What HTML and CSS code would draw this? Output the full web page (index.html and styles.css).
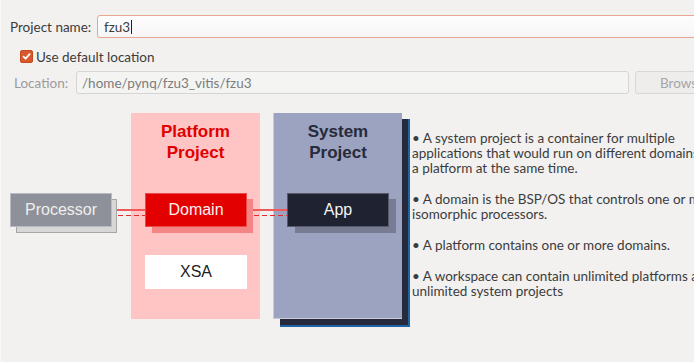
FILE: index.html
```html
<!DOCTYPE html>
<html lang="en">

<head>
  <meta charset="UTF-8" />
  <meta name="viewport" content="width=device-width, initial-scale=1.0" />
  <title>New Application Project</title>
  <link rel="stylesheet" href="styles.css">
</head>

<body>
  <div class="page">

    <!-- 项目名称和位置 -->
    <div class="form">
      <div class="row name-row">
        <label class="label">Project name:</label>
        <div class="input name-input"><span class="value">fzu3</span><span class="caret"></span></div>
      </div>

      <div class="row check-row">
        <span class="checkbox">
          <svg width="9" height="9" viewBox="0 0 9 9"><path d="M1.5 4.6 L3.6 6.7 L7.6 2.2" fill="none" stroke="#fff" stroke-width="1.8" stroke-linecap="round" stroke-linejoin="round"/></svg>
        </span>
        <span class="check-text">Use default location</span>
      </div>

      <div class="row loc-row">
        <label class="label dim">Location:</label>
        <div class="input loc-input"><span class="value">/home/pynq/fzu3_vitis/fzu3</span></div>
        <button class="browse">Browse...</button>
      </div>
    </div>

    <!-- 示意图和说明 -->
    <div class="overview">
      <div class="diagram">
        <div class="node platform">
          <div class="title">Platform<br />Project</div>
        </div>
        <div class="node system-shadow"></div>
        <div class="node system">
          <div class="title">System<br />Project</div>
        </div>

        <div class="wire solid"></div>
        <div class="wire dashed"></div>

        <div class="node box-shadow proc-shadow"></div>
        <div class="node box processor">Processor</div>
        <div class="node box-shadow domain-shadow"></div>
        <div class="node box domain">Domain</div>
        <div class="node box-shadow app-shadow"></div>
        <div class="node box app">App</div>
        <div class="node box xsa">XSA</div>
      </div>

      <div class="notes">
        <p>• A system project is a container for multiple<br />applications that would run on different domains on<br />a platform at the same time.</p>
        <p>• A domain is the BSP/OS that controls one or more<br />isomorphic processors.</p>
        <p>• A platform contains one or more domains.</p>
        <p>• A workspace can contain unlimited platforms and<br />unlimited system projects</p>
      </div>
    </div>

  </div>
</body>

</html>
```

FILE: styles.css
```css
* {
  margin: 0;
  padding: 0;
  box-sizing: border-box;
}

html,
body {
  width: 694px;
  height: 362px;
  overflow: hidden;
}

body {
  background: #f2f1f0;
  font: 13.5px "Lato", "Noto Sans", sans-serif;
  color: #3c3c3c;
}

.page {
  width: 694px;
  height: 362px;
  overflow: hidden;
  border-left: 1px solid #f8f8f7;
}

/* 表单部分 */
.form {
  height: 100px;
  padding: 15px 0 0 9px;
}

.row {
  display: flex;
  align-items: center;
}

.label {
  white-space: nowrap;
  flex-shrink: 0;
}

.label.dim {
  color: #9b9b9b;
  padding-left: 4px;
}

.input {
  height: 23px;
  display: flex;
  align-items: center;
  border-radius: 3px;
  white-space: nowrap;
  flex-shrink: 0;
}

.name-row .label {
  width: 87px;
}

.name-input {
  flex: 1;
  margin-right: -6px;
  padding-left: 6px;
  border: 1px solid #eaa58f;
  background: linear-gradient(#fdfdfd, #f6f6f6);
  color: #3c3c3c;
}

.caret {
  width: 1px;
  height: 14px;
  margin-left: 1px;
  background: #222;
}

.check-row {
  margin-top: 12px;
  padding-left: 10px;
  height: 13px;
}

.checkbox {
  width: 13px;
  height: 13px;
  border-radius: 2px;
  background: #d9592c;
  border: 1px solid #c44b22;
  display: flex;
  align-items: center;
  justify-content: center;
  margin-right: 3px;
}

.checkbox svg {
  display: block;
}

.loc-row {
  margin-top: 8px;
}

.loc-row .label {
  width: 66px;
}

.loc-input {
  width: 553px;
  padding-left: 5px;
  border: 1px solid #d6d5d3;
  background: #f4f4f3;
  color: #7c7c7c;
}

.browse {
  width: 100px;
  height: 23px;
  margin-left: 6px;
  padding-left: 24px;
  flex-shrink: 0;
  text-align: left;
  border: 1px solid #d8d7d5;
  border-radius: 3px;
  background: #eeedec;
  color: #a5a5a5;
  font: inherit;
  white-space: nowrap;
  overflow: hidden;
}

/* 示意图 */
.overview {
  display: flex;
  height: 262px;
}

.diagram {
  position: relative;
  width: 411px;
  flex-shrink: 0;
  font-family: "Liberation Sans", Arial, sans-serif;
}

.node {
  position: absolute;
}

.title {
  padding-top: 8px;
  text-align: center;
  font-weight: bold;
  font-size: 17px;
  line-height: 21px;
}

.platform {
  left: 130px;
  top: 13px;
  width: 129px;
  height: 206px;
  background: #ffc4c4;
}

.platform .title {
  color: #e00000;
}

.system-shadow {
  left: 279px;
  top: 19px;
  width: 130px;
  height: 208px;
  background: #262a3b;
  border-right: 2px solid #1e64a4;
  border-bottom: 2px solid #1e64a4;
}

.system {
  left: 272px;
  top: 13px;
  width: 129px;
  height: 206px;
  background: #9ca3c0;
  border-left: 1px solid #c9cbd6;
  border-bottom: 1px solid #c9cbd6;
}

.system .title {
  color: #262a3a;
}

.wire {
  position: absolute;
}

.wire.solid {
  left: 111px;
  top: 109px;
  width: 176px;
  height: 2px;
  background: #ef5a5a;
}

.wire.dashed {
  left: 117px;
  top: 115px;
  width: 170px;
  height: 1px;
  background: repeating-linear-gradient(90deg, #e42a2a 0 5px, transparent 5px 8px);
}

.box {
  width: 102px;
  height: 34px;
  display: flex;
  align-items: center;
  justify-content: center;
  font-size: 16px;
}

.box-shadow {
  width: 101px;
  height: 34px;
}

.proc-shadow {
  left: 15px;
  top: 99px;
  background: #d7d7d7;
  border: 1px solid #a6a6a6;
}

.processor {
  left: 9px;
  top: 93px;
  background: #8e9199;
  border: 1px solid #b9bbc0;
  color: #eeeeee;
}

.domain-shadow {
  left: 151px;
  top: 99px;
  background: #f48585;
}

.domain {
  left: 144px;
  top: 93px;
  background: #e20000;
  border: 1px solid #ea4a4a;
  color: #fdf0f0;
}

.app-shadow {
  left: 294px;
  top: 99px;
  background: #787c93;
}

.app {
  left: 286px;
  top: 93px;
  background: #1f2230;
  border: 1px solid #565a6a;
  color: #f4f4f4;
}

.xsa {
  left: 144px;
  top: 155px;
  background: #ffffff;
  color: #222;
}

/* 说明文字 */
.notes {
  padding-top: 31px;
  line-height: 15px;
  white-space: nowrap;
  color: #3c3c3c;
}

.notes p {
  margin-bottom: 16px;
}
```
